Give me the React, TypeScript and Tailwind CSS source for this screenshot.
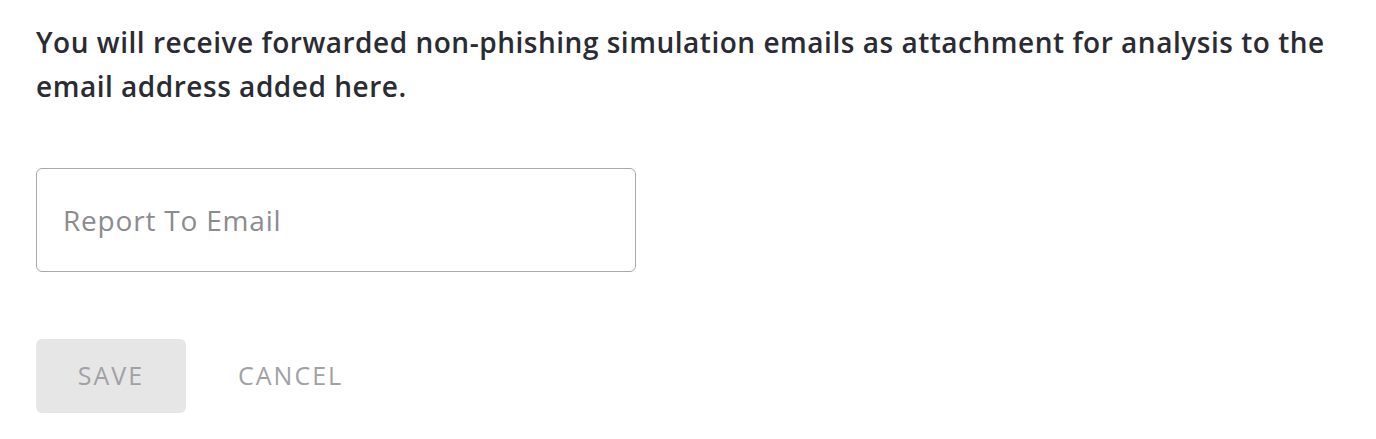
export default function App() {
  return (
    <div className="w-[1376px] h-[439px] bg-white px-9 pt-[20px] font-['Open_Sans','Lato',sans-serif]">
      <p className="text-[28px] leading-[44px] tracking-[0.52px] font-semibold text-[#2a2b33] max-w-[1310px]">
        You will receive forwarded non-phishing simulation emails as attachment for analysis to the email address added here.
      </p>
      <div className="mt-[60px] w-[600px] h-[104px] rounded-[6px] border border-[#a9a9ad] flex items-center px-[26px]">
        <input
          className="w-full outline-none text-[28px] tracking-[0.8px] text-[#2a2b33] placeholder:text-[#8b8b90] bg-transparent"
          placeholder="Report To Email"
        />
      </div>
      <div className="mt-[67px] flex items-center gap-[52px]">
        <button
          type="button"
          className="w-[150px] h-[74px] rounded-[6px] bg-[#e6e6e6] text-[25px] tracking-[2px] text-[#a1a1a5] uppercase"
        >
          Save
        </button>
        <button type="button" className="text-[25px] tracking-[2px] text-[#a1a1a5] uppercase">
          Cancel
        </button>
      </div>
    </div>
  );
}
